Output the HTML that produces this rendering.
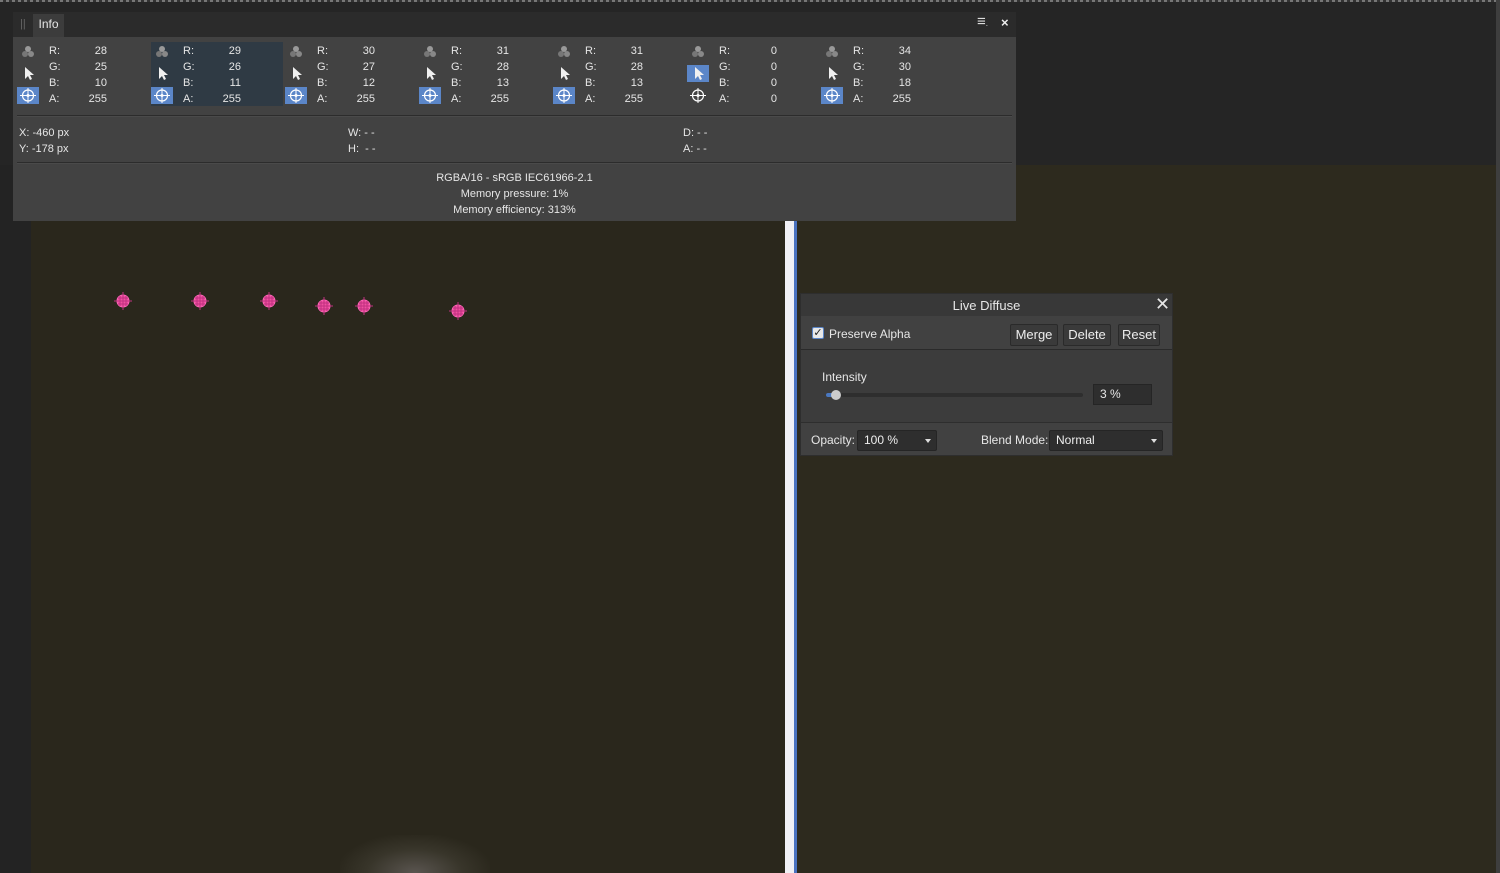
<!DOCTYPE html>
<html><head><meta charset="utf-8"><style>
*{margin:0;padding:0;box-sizing:border-box}
body{width:1500px;height:873px;overflow:hidden;background:#252525;font-family:"Liberation Sans",sans-serif;font-size:11px;color:#e6e6e6;position:relative}
.a{position:absolute}
.topdash{left:0;top:0;width:1500px;height:2px;background:repeating-linear-gradient(90deg,#777 0 3px,#333 3px 6px)}
.col{position:absolute;top:42px;width:134px;height:64px}
.col.sel{background:#2f3a44;width:132px}
.col .l{position:absolute;left:32px}
.col .v{position:absolute;left:60px;width:30px;text-align:right}
.ic{position:absolute;left:0;width:22px;height:17px}
.ic.on{background:#5b86c8}
.btn{position:absolute;top:323px;height:22px;background:#3a3a3a;border:1px solid #2a2a2a;border-radius:2px;font-size:13px;text-align:center;line-height:20px;color:#eee}
.dd{position:absolute;height:21px;background:#2e2e2e;border:1px solid #252525;border-radius:2px;font-size:12px;line-height:19px;padding-left:6px;color:#eee}
.dd:after{content:"";position:absolute;right:5px;top:8px;border:3px solid transparent;border-top:4px solid #ddd}
</style></head><body>
<div class="a topdash"></div>
<div class="a" style="left:0;top:165px;width:31px;height:708px;background:#232323"></div>
<div class="a" style="left:31px;top:165px;width:754px;height:708px;background:#2a271c"></div>
<div class="a" style="left:340px;top:835px;width:150px;height:38px;background:radial-gradient(ellipse at 50% 100%,#5a5550 0,#38352a 45%,rgba(42,39,28,0) 75%)"></div>
<div class="a" style="left:785px;top:165px;width:10px;height:708px;background:#f0f0f5"></div>
<div class="a" style="left:794px;top:165px;width:3px;height:708px;background:#4a72c0"></div>
<div class="a" style="left:797px;top:165px;width:699px;height:708px;background:#2d2a1e"></div>
<div class="a" style="left:1496px;top:0;width:4px;height:873px;background:#3e3e3e"></div>
<svg class="a" style="left:0;top:0" width="800" height="873">
<g fill="#f050a0" stroke="#ff66b8" stroke-width="1">
<g transform="translate(123,301)"><circle r="6"/><path d="M-9 0H9M0-9V9M-3 -5V5M3-5V5M-5-3H5M-5 3H5" stroke="#c03080"/></g>
<g transform="translate(200,301)"><circle r="6"/><path d="M-9 0H9M0-9V9M-3 -5V5M3-5V5M-5-3H5M-5 3H5" stroke="#c03080"/></g>
<g transform="translate(269,301)"><circle r="6"/><path d="M-9 0H9M0-9V9M-3 -5V5M3-5V5M-5-3H5M-5 3H5" stroke="#c03080"/></g>
<g transform="translate(324,306)"><circle r="6"/><path d="M-9 0H9M0-9V9M-3 -5V5M3-5V5M-5-3H5M-5 3H5" stroke="#c03080"/></g>
<g transform="translate(364,306)"><circle r="6"/><path d="M-9 0H9M0-9V9M-3 -5V5M3-5V5M-5-3H5M-5 3H5" stroke="#c03080"/></g>
<g transform="translate(458,311)"><circle r="6"/><path d="M-9 0H9M0-9V9M-3 -5V5M3-5V5M-5-3H5M-5 3H5" stroke="#c03080"/></g>
</g></svg>
<div class="a" style="left:13px;top:12px;width:1003px;height:209px;background:#424242"></div>
<div class="a" style="left:13px;top:12px;width:1003px;height:25px;background:#2b2b2b"></div>
<div class="a" style="left:20px;top:18px;color:#666;font-size:11px">||</div>
<div class="a" style="left:33px;top:14px;width:31px;height:23px;background:#3c3c3c;font-size:12px;line-height:21px;text-align:center">Info</div>
<div class="a" style="left:977px;top:13px;font-size:15px;color:#ddd">≡<span style="font-size:8px">.</span></div>
<div class="a" style="left:1001px;top:15px;font-size:13px;font-weight:bold;color:#eee">×</div>
<div id="cols"></div>
<div class="a" style="left:17px;top:115px;width:995px;height:2px;background:#2c2c2c;border-bottom:1px solid #4a4a4a"></div>
<div class="a" style="left:19px;top:125px;line-height:16px">X: -460 px<br>Y: -178 px</div>
<div class="a" style="left:348px;top:125px;line-height:16px">W: - -<br>H:&nbsp; - -</div>
<div class="a" style="left:683px;top:125px;line-height:16px">D: - -<br>A: - -</div>
<div class="a" style="left:17px;top:162px;width:995px;height:2px;background:#2c2c2c;border-bottom:1px solid #4a4a4a"></div>
<div class="a" style="left:13px;top:170px;width:1003px;text-align:center;line-height:16px">RGBA/16 - sRGB IEC61966-2.1<br>Memory pressure: 1%<br>Memory efficiency: 313%</div>
<div class="a" style="left:800px;top:293px;width:373px;height:163px;background:#3c3c3c;border:1px solid #2e2e2e"></div>
<div class="a" style="left:801px;top:294px;width:371px;height:22px;background:#383838;text-align:center;font-size:13px;line-height:23px">Live Diffuse</div>
<div class="a" style="left:1155px;top:294px;font-size:18px;line-height:20px">✕</div>
<div class="a" style="left:801px;top:316px;width:371px;height:34px;background:#414141;border-bottom:1px solid #2a2a2a"></div>
<div class="a" style="left:812px;top:327px;width:12px;height:12px;background:#e8e8e8;border:1px solid #5b86c8;border-radius:2px;color:#222;font-size:11px;line-height:10px;text-align:center">✓</div>
<div class="a" style="left:829px;top:327px;font-size:12px">Preserve Alpha</div>
<div class="btn" style="left:1010px;width:48px;top:324px">Merge</div>
<div class="btn" style="left:1063px;width:48px;top:324px">Delete</div>
<div class="btn" style="left:1118px;width:42px;top:324px">Reset</div>
<div class="a" style="left:822px;top:370px;font-size:12px">Intensity</div>
<div class="a" style="left:826px;top:393px;width:257px;height:4px;background:#2e2e2e;border-radius:2px"></div>
<div class="a" style="left:826px;top:393px;width:8px;height:4px;background:#4a78c0;border-radius:2px"></div>
<div class="a" style="left:831px;top:390px;width:10px;height:10px;background:#ccc;border-radius:50%"></div>
<div class="a" style="left:1093px;top:384px;width:59px;height:21px;background:#2e2e2e;border:1px solid #252525;font-size:12px;line-height:19px;padding-left:6px">3 %</div>
<div class="a" style="left:801px;top:422px;width:371px;height:33px;background:#414141;border-top:1px solid #2e2e2e"></div>
<div class="a" style="left:811px;top:433px;font-size:12px">Opacity:</div>
<div class="dd" style="left:857px;top:430px;width:80px">100 %</div>
<div class="a" style="left:981px;top:433px;font-size:12px">Blend Mode:</div>
<div class="dd" style="left:1049px;top:430px;width:114px">Normal</div>
<script>
var d=[[28,25,10,255],[29,26,11,255],[30,27,12,255],[31,28,13,255],[31,28,13,255],[0,0,0,0],[34,30,18,255]];
var h='';
var dots='<svg class="ic" style="top:2px" viewBox="0 0 22 17"><circle cx="11" cy="5" r="3" fill="#999"/><circle cx="8" cy="10" r="3" fill="#777"/><circle cx="14" cy="10" r="3" fill="#888"/></svg>';
var arr=function(on){return '<svg class="ic'+(on?' on':'')+'" style="top:23px" viewBox="0 0 22 17"><path d="M8 2L8 14L11 11L13 15L15 14L13 10L17 10Z" fill="#f0f0f0"/></svg>'};
var tg=function(on){return '<svg class="ic'+(on?' on':'')+'" style="top:45px" viewBox="0 0 22 17"><circle cx="11" cy="8.5" r="5.5" fill="none" stroke="#fff" stroke-width="1.2"/><circle cx="11" cy="8.5" r="1.5" fill="#fff"/><path d="M3 8.5H19M11 1V16" stroke="#fff" stroke-width="1"/></svg>'};
d.forEach(function(v,i){var x=17+i*134;
h+='<div class="col'+(i==1?' sel':'')+'" style="left:'+x+'px">'+dots+arr(i==5)+tg(i!=5);
['R:','G:','B:','A:'].forEach(function(l,j){h+='<div class="l" style="top:'+(j*16.3+2.5)+'px">'+l+'</div><div class="v" style="top:'+(j*16.3+2.5)+'px">'+v[j]+'</div>'});
h+='</div>'});
document.getElementById('cols').innerHTML=h;
</script>
</body></html>
